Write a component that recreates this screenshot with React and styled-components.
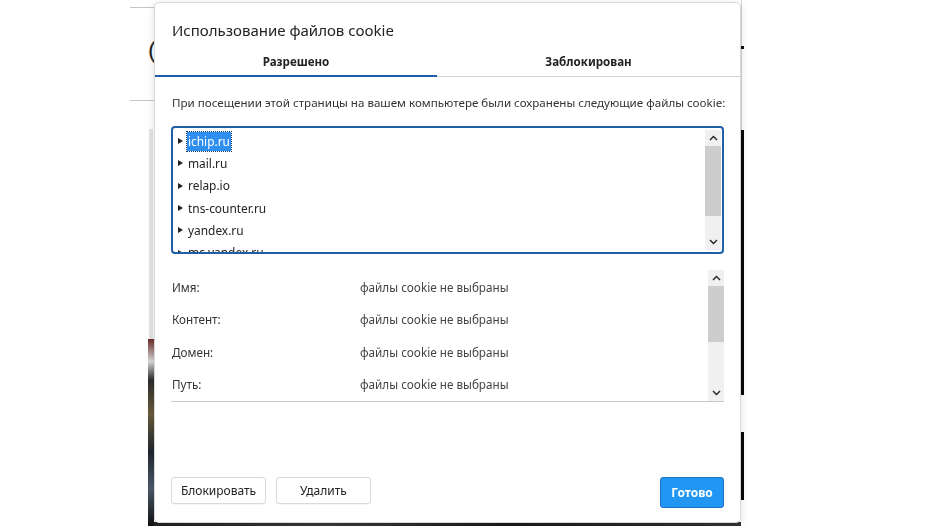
import React from "react";
import styled, { createGlobalStyle } from "styled-components";

const Global = createGlobalStyle`
  html, body { margin: 0; padding: 0; background: #fff; }
  body { font-family: "Noto Sans", "Open Sans", Arial, sans-serif; }
  #root { width: 926px; height: 526px; overflow: hidden; }
`;

const Page = styled.div`
  width: 926px;
  height: 526px;
  display: flex;
  background: #fff;
`;

const LeftGutter = styled.div`
  width: 130px;
  flex: none;
`;

const LeftColumn = styled.div`
  width: 24px;
  flex: none;
  display: flex;
  flex-direction: column;
  align-items: stretch;
`;

const Tick = styled.div`
  height: 1px;
  background: #c4c4c4;
  margin-top: ${(p) => p.$top}px;
`;

const Paren = styled.div`
  font-family: "Liberation Sans", Arial, sans-serif;
  font-size: 24px;
  line-height: 24px;
  color: #222;
  margin-top: 30px;
  padding-left: 18px;
`;

const GreyStrip = styled.div`
  margin-top: 28px;
  margin-left: 19px;
  width: 4px;
  height: 210px;
  background: #e4e4e4;
`;

const PhotoStrip = styled.div`
  margin-left: 18px;
  flex: 1;
  width: 6px;
  background: linear-gradient(180deg, #6b2a2a 0%, #d9d9d9 12%, #2b2b2b 22%, #6b5b3a 40%, #1f2630 60%, #4a5a6a 80%, #111 100%);
`;

const Middle = styled.div`
  flex: none;
  width: 587px;
  display: flex;
  flex-direction: column;
  justify-content: flex-end;
`;

const BottomPhoto = styled.div`
  height: 4px;
  background: linear-gradient(90deg, #222, #3a3a3a 30%, #1b1b1b 60%, #333);
`;

const RightColumn = styled.div`
  width: 6px;
  flex: none;
  display: flex;
  flex-direction: column;
  align-items: flex-start;
`;

const ThinLine = styled.div`
  width: 1px;
  height: 130px;
  background: #d5d5d5;
`;

const Dot = styled.div`
  width: 3px;
  height: 3px;
  background: #111;
  margin: 46px 0 0 0;
`;

const BlackBar = styled.div`
  width: 3px;
  height: ${(p) => p.$h}px;
  margin-top: ${(p) => p.$mt}px;
  background: #0a0a0a;
`;

const Dialog = styled.div`
  position: fixed;
  left: 154px;
  top: 2px;
  width: 587px;
  height: 521px;
  box-sizing: border-box;
  background: #fff;
  border: 1px solid #d8d8d8;
  border-radius: 5px;
  box-shadow: 0 2px 8px rgba(0, 0, 0, 0.12);
  display: flex;
  flex-direction: column;
`;

const Title = styled.h1`
  margin: 0;
  padding: 16px 17px 6px;
  font-size: 15px;
  line-height: 22px;
  font-weight: 400;
  color: #222;
`;

const Tabs = styled.div`
  display: flex;
  border-bottom: 1px solid #d4d4d4;
`;

const Tab = styled.div`
  flex: ${(p) => (p.$active ? "0 0 282px" : "1")};
  height: 30px;
  box-sizing: border-box;
  display: flex;
  align-items: center;
  justify-content: center;
  font-size: 11.6px;
  font-weight: 700;
  color: #222;
  border-bottom: 2px solid ${(p) => (p.$active ? "#1d5ea8" : "transparent")};
  margin-bottom: -1px;
  padding-top: 1px;
`;

const Body = styled.div`
  flex: 1;
  padding: 0 16px;
  display: flex;
  flex-direction: column;
`;

const Description = styled.p`
  margin: 17px 0 0 1px;
  font-size: 11.6px;
  line-height: 18px;
  color: #333;
  white-space: nowrap;
`;

const TreeBox = styled.div`
  margin-top: 14px;
  height: 128px;
  box-sizing: border-box;
  border: 2px solid #1f5fa6;
  border-radius: 4px;
  display: flex;
  overflow: hidden;
`;

const TreeList = styled.ul`
  flex: 1;
  list-style: none;
  margin: 0;
  padding: 2px 0 0 5px;
  overflow: hidden;
`;

const TreeRow = styled.li`
  height: 22.3px;
  display: flex;
  align-items: center;
  font-size: 11.9px;
  color: #222;
`;

const Arrow = styled.span`
  width: 0;
  height: 0;
  border-top: 3.5px solid transparent;
  border-bottom: 3.5px solid transparent;
  border-left: 5px solid #222;
  margin-right: 5px;
`;

const Label = styled.span`
  padding: 1px 1px 2px;
  line-height: 16px;
  background: ${(p) => (p.$selected ? "#2f8ff0" : "transparent")};
  color: ${(p) => (p.$selected ? "#fff" : "#222")};
  outline: ${(p) => (p.$selected ? "1px dotted #1a3a6a" : "none")};
  margin-left: -1px;
`;

const ScrollBar = styled.div`
  width: 16px;
  flex: none;
  margin: ${(p) => p.$m};
  background: #f0f0f0;
  display: flex;
  flex-direction: column;
  align-items: center;
`;

const ScrollBtn = styled.div`
  height: 16px;
  width: 16px;
  display: flex;
  align-items: center;
  justify-content: center;
`;

const Thumb = styled.div`
  width: 16px;
  height: ${(p) => p.$h}px;
  background: #cdcdcd;
`;

const Track = styled.div`
  flex: 1;
`;

const Details = styled.div`
  margin-top: 15px;
  height: 133px;
  box-sizing: border-box;
  border-bottom: 1px solid #c9c9c9;
  display: flex;
`;

const DetailRows = styled.div`
  flex: 1;
  padding-top: 2px;
`;

const DetailRow = styled.div`
  height: 32.3px;
  display: grid;
  grid-template-columns: 188px 1fr;
  align-items: center;
  font-size: 11.7px;
  color: #333;
  padding-left: 1px;
`;

const DetailValue = styled.span`
  color: #444;
`;

const Footer = styled.div`
  padding: 0 16px 14px;
  display: flex;
  align-items: flex-start;
  gap: 10px;
`;

const Button = styled.button`
  height: 27px;
  width: 95px;
  box-sizing: border-box;
  border: 1px solid #dadada;
  border-radius: 3px;
  background: #fff;
  font-family: inherit;
  font-size: 12px;
  color: #222;
  padding: 0;
  box-shadow: 0 1px 1px rgba(0, 0, 0, 0.04);
`;

const PrimaryButton = styled.button`
  margin-left: auto;
  height: 31px;
  width: 64px;
  box-sizing: border-box;
  border: 1px solid #1a73c4;
  border-radius: 3px;
  background: #2196f3;
  font-family: inherit;
  font-size: 12px;
  font-weight: 700;
  color: #fff;
  padding: 0;
`;

const Chevron = ({ up }) => (
  <svg width="9" height="6" viewBox="0 0 9 6">
    <path
      d={up ? "M1 5 L4.5 1.5 L8 5" : "M1 1 L4.5 4.5 L8 1"}
      fill="none"
      stroke="#222"
      strokeWidth="1.4"
    />
  </svg>
);

const domains = ["ichip.ru", "mail.ru", "relap.io", "tns-counter.ru", "yandex.ru", "mc.yandex.ru"];
const fields = ["Имя:", "Контент:", "Домен:", "Путь:"];

export default function App() {
  return (
    <>
      <Global />
      <Page>
        <LeftGutter />
        <LeftColumn>
          <Tick $top={7} />
          <Paren>(</Paren>
          <Tick $top={38} />
          <GreyStrip />
          <PhotoStrip />
        </LeftColumn>
        <Middle>
          <BottomPhoto />
        </Middle>
        <RightColumn>
          <ThinLine>
            <Dot />
          </ThinLine>
          <BlackBar $h={265} $mt={0} />
          <BlackBar $h={68} $mt={37} />
        </RightColumn>
      </Page>
      <Dialog>
        <Title>Использование файлов cookie</Title>
        <Tabs>
          <Tab $active>Разрешено</Tab>
          <Tab>Заблокирован</Tab>
        </Tabs>
        <Body>
          <Description>
            При посещении этой страницы на вашем компьютере были сохранены следующие файлы cookie:
          </Description>
          <TreeBox>
            <TreeList>
              {domains.map((d, i) => (
                <TreeRow key={d}>
                  <Arrow />
                  <Label $selected={i === 0}>{d}</Label>
                </TreeRow>
              ))}
            </TreeList>
            <ScrollBar $m="2px 1px 2px 0">
              <ScrollBtn>
                <Chevron up />
              </ScrollBtn>
              <Thumb $h={70} />
              <Track />
              <ScrollBtn>
                <Chevron />
              </ScrollBtn>
            </ScrollBar>
          </TreeBox>
          <Details>
            <DetailRows>
              {fields.map((f) => (
                <DetailRow key={f}>
                  <span>{f}</span>
                  <DetailValue>файлы cookie не выбраны</DetailValue>
                </DetailRow>
              ))}
            </DetailRows>
            <ScrollBar $m="1px 0 0 0">
              <ScrollBtn>
                <Chevron up />
              </ScrollBtn>
              <Thumb $h={56} />
              <Track />
              <ScrollBtn>
                <Chevron />
              </ScrollBtn>
            </ScrollBar>
          </Details>
        </Body>
        <Footer>
          <Button>Блокировать</Button>
          <Button>Удалить</Button>
          <PrimaryButton>Готово</PrimaryButton>
        </Footer>
      </Dialog>
    </>
  );
}
